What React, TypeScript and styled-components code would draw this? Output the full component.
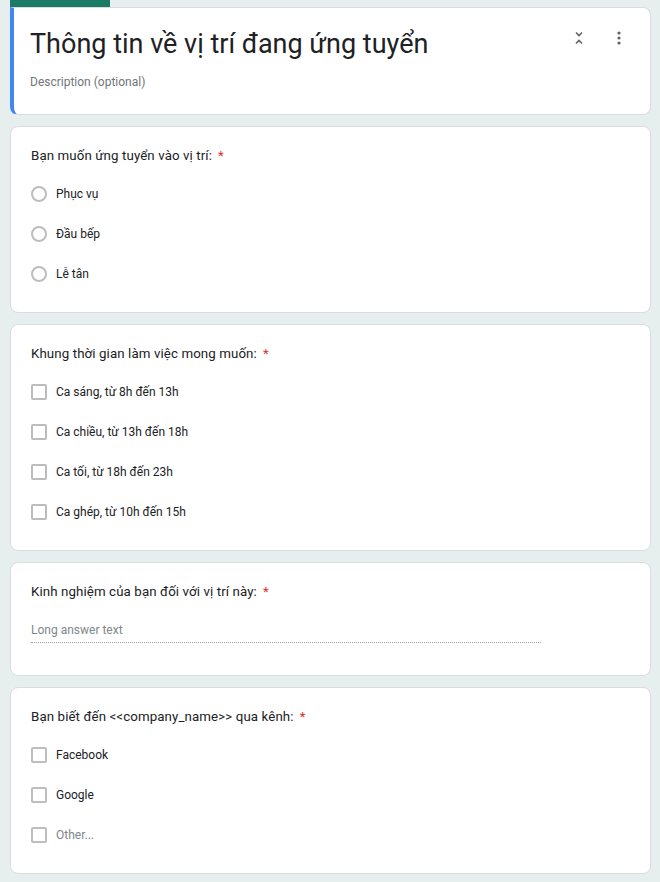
import React from 'react';
import styled, { createGlobalStyle } from 'styled-components';

const GlobalStyle = createGlobalStyle`
  html, body {
    margin: 0;
    padding: 0;
    background: #e6efed;
    font-family: Roboto, "Noto Sans", Arial, sans-serif;
    color: #202124;
  }
`;

const Page = styled.div`
  display: flex;
  flex-direction: column;
  gap: 11px;
  padding: 0 9px 10px 10px;
`;

const HeaderWrap = styled.div`
  display: flex;
  flex-direction: column;
`;

const ThemeTab = styled.div`
  width: 100px;
  height: 7px;
  background: #1b7b64;
`;

const Card = styled.section<{ $accent?: boolean }>`
  background: #fff;
  border: 1px solid #dadce0;
  border-radius: ${(p) => (p.$accent ? '0 8px 8px 8px' : '8px')};
  ${(p) => p.$accent && 'border-left: 4px solid #4285f4;'}
  padding: ${(p) => (p.$accent ? '16px 20px 24px 16px' : '19px 20px 18px 20px')};
`;

const HeaderRow = styled.div`
  display: flex;
  align-items: flex-start;
  justify-content: space-between;
`;

const Title = styled.h1`
  margin: 0;
  font-size: 27px;
  line-height: 40px;
  font-weight: 400;
  color: #202124;
`;

const Tools = styled.div`
  display: flex;
  gap: 33px;
  padding-top: 7px;
  padding-right: 9px;
  color: #5f6368;
`;

const Description = styled.div`
  margin-top: 10px;
  font-size: 12px;
  line-height: 16px;
  color: #70757a;
`;

const Question = styled.div`
  font-size: 13.3px;
  line-height: 20px;
  color: #202124;
  letter-spacing: 0.1px;
`;

const Star = styled.span`
  color: #d93025;
  margin-left: 6px;
`;

const Options = styled.div`
  display: flex;
  flex-direction: column;
  margin-top: 8px;
`;

const Option = styled.div`
  display: flex;
  align-items: center;
  height: 40px;
  gap: 9px;
  font-size: 12px;
`;

const Radio = styled.span`
  width: 16px;
  height: 16px;
  box-sizing: border-box;
  border: 2px solid #bdbdbd;
  border-radius: 50%;
  flex-shrink: 0;
`;

const Box = styled.span`
  width: 16px;
  height: 16px;
  box-sizing: border-box;
  border: 2px solid #bdbdbd;
  border-radius: 2px;
  flex-shrink: 0;
`;

const Label = styled.span<{ $muted?: boolean }>`
  color: ${(p) => (p.$muted ? '#80868b' : '#202124')};
`;

const LongAnswer = styled.div`
  width: 510px;
  margin-top: 18px;
  margin-bottom: 14px;
  padding-bottom: 2px;
  border-bottom: 1px dotted #9aa0a6;
  font-size: 12px;
  line-height: 20px;
  color: #80868b;
`;

const CollapseIcon = () => (
  <svg width="10" height="14" viewBox="0 0 10 14" fill="none" stroke="#5f6368" strokeWidth="1.6">
    <path d="M2 1.5 L5 4.5 L8 1.5" />
    <path d="M2 12.5 L5 9.5 L8 12.5" />
  </svg>
);

const MoreIcon = () => (
  <svg width="4" height="14" viewBox="0 0 4 14" fill="#5f6368">
    <circle cx="2" cy="2" r="1.6" />
    <circle cx="2" cy="7" r="1.6" />
    <circle cx="2" cy="12" r="1.6" />
  </svg>
);

type Kind = 'radio' | 'check';

const ChoiceQuestion = ({ title, kind, items, other }: { title: string; kind: Kind; items: string[]; other?: boolean }) => (
  <Card>
    <Question>
      {title}
      <Star>*</Star>
    </Question>
    <Options>
      {items.map((it) => (
        <Option key={it}>
          {kind === 'radio' ? <Radio /> : <Box />}
          <Label>{it}</Label>
        </Option>
      ))}
      {other && (
        <Option>
          {kind === 'radio' ? <Radio /> : <Box />}
          <Label $muted>Other...</Label>
        </Option>
      )}
    </Options>
  </Card>
);

export default function App() {
  return (
    <>
      <GlobalStyle />
      <Page>
        <HeaderWrap>
          <ThemeTab />
          <Card $accent>
            <HeaderRow>
              <Title>Thông tin về vị trí đang ứng tuyển</Title>
              <Tools>
                <CollapseIcon />
                <MoreIcon />
              </Tools>
            </HeaderRow>
            <Description>Description (optional)</Description>
          </Card>
        </HeaderWrap>

        <ChoiceQuestion
          title="Bạn muốn ứng tuyển vào vị trí:"
          kind="radio"
          items={['Phục vụ', 'Đầu bếp', 'Lễ tân']}
        />

        <ChoiceQuestion
          title="Khung thời gian làm việc mong muốn:"
          kind="check"
          items={['Ca sáng, từ 8h đến 13h', 'Ca chiều, từ 13h đến 18h', 'Ca tối, từ 18h đến 23h', 'Ca ghép, từ 10h đến 15h']}
        />

        <Card>
          <Question>
            Kinh nghiệm của bạn đối với vị trí này:
            <Star>*</Star>
          </Question>
          <LongAnswer>Long answer text</LongAnswer>
        </Card>

        <ChoiceQuestion
          title="Bạn biết đến <<company_name>> qua kênh:"
          kind="check"
          items={['Facebook', 'Google']}
          other
        />
      </Page>
    </>
  );
}
